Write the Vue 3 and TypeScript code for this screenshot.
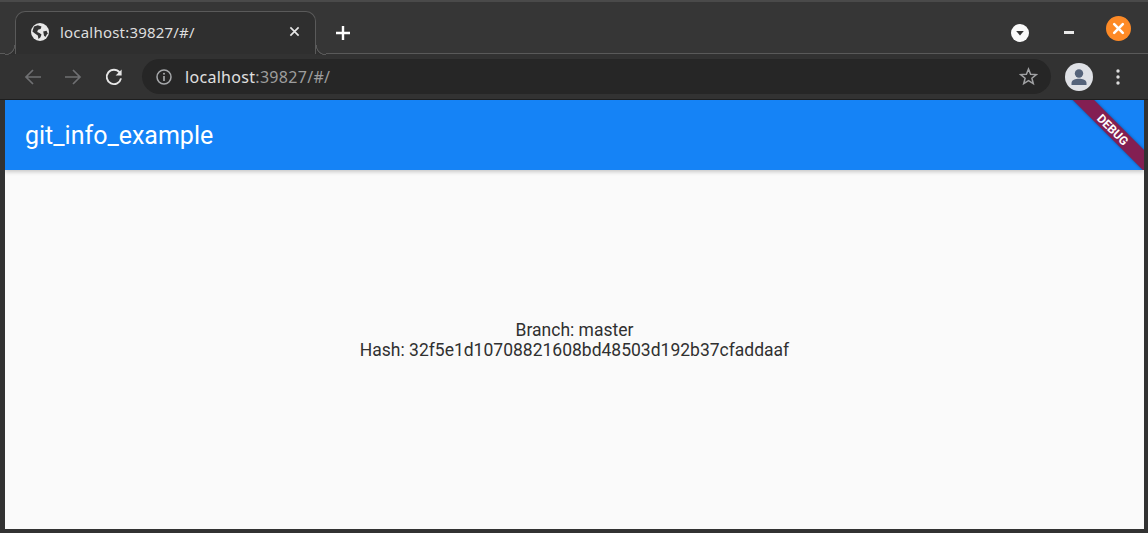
<script setup lang="ts">
const url = 'localhost:39827/#/'
const host = 'localhost'
const rest = ':39827/#/'
const branch = 'master'
const hash = '32f5e1d10708821608bd48503d192b37cfaddaaf'
</script>

<template>
  <div class="window">
    <header class="tabstrip">
      <div class="tab">
        <svg class="globe" width="18" height="18" viewBox="0 0 18 18">
          <circle cx="9" cy="9" r="9" fill="#e8e8e8" />
          <path d="M3 3.5 6.8 2.2 10.5 3.4 9.6 6 7 6.8 6.2 9 8.5 10 10.5 11.6 9.5 14.2 7.5 16 6.8 12.6 3.6 10.2 1.4 8.4Z" fill="#333" />
          <path d="M12.2 8.6 15.6 7.8 16.6 10.2 14.4 14 13 12.4Z" fill="#333" />
        </svg>
        <span class="tab-title">{{ url }}</span>
        <svg class="tab-close" width="11" height="11" viewBox="0 0 12 12">
          <path d="M1.5 1.5 10.5 10.5M10.5 1.5 1.5 10.5" stroke="#e6e6e6" stroke-width="1.8" fill="none" />
        </svg>
      </div>
      <svg class="new-tab" width="16" height="16" viewBox="0 0 16 16">
        <path d="M8 1V15M1 8H15" stroke="#fff" stroke-width="2.4" fill="none" />
      </svg>
      <div class="win-controls">
        <svg class="dropdown" width="18" height="18" viewBox="0 0 18 18">
          <circle cx="9" cy="9" r="9" fill="#fafafa" />
          <path d="M5.2 7H12.8L9 11.6Z" fill="#333" />
        </svg>
        <span class="minimize"></span>
        <svg class="close" width="25" height="25" viewBox="0 0 25 25">
          <circle cx="12.5" cy="12.5" r="12.5" fill="#fd8a26" />
          <path d="M8.2 8.2 16.8 16.8M16.8 8.2 8.2 16.8" stroke="#fff" stroke-width="2.6" stroke-linecap="round" fill="none" />
        </svg>
      </div>
    </header>

    <nav class="toolbar">
      <svg class="nav-icon first" width="18" height="18" viewBox="0 0 18 18">
        <path d="M17 9H2M9 2 2 9 9 16" stroke="#6f7072" stroke-width="1.7" fill="none" />
      </svg>
      <svg class="nav-icon" width="18" height="18" viewBox="0 0 18 18">
        <path d="M1 9H16M9 2 16 9 9 16" stroke="#6f7072" stroke-width="1.7" fill="none" />
      </svg>
      <svg class="nav-icon" width="20" height="20" viewBox="0 0 20 20">
        <path d="M15.6 5.4A7.2 7.2 0 1 0 17 11.4" stroke="#e6e6e6" stroke-width="1.9" fill="none" />
        <path d="M17.6 2.4V8.4H11.6Z" fill="#e6e6e6" />
      </svg>
      <div class="omnibox">
        <svg class="info" width="16" height="16" viewBox="0 0 16 16">
          <circle cx="8" cy="8" r="7" stroke="#a6a8ab" stroke-width="1.5" fill="none" />
          <path d="M8 7V12" stroke="#a6a8ab" stroke-width="1.7" />
          <circle cx="8" cy="4.7" r="1" fill="#a6a8ab" />
        </svg>
        <span class="address"><span class="host">{{ host }}</span><span class="rest">{{ rest }}</span></span>
        <svg class="star" width="19" height="19" viewBox="0 0 19 19">
          <path d="M9.5 2 11.6 7.2 17.3 7.6 12.9 11.2 14.3 16.7 9.5 13.7 4.7 16.7 6.1 11.2 1.7 7.6 7.4 7.2Z" stroke="#a0a1a3" stroke-width="1.5" fill="none" />
        </svg>
      </div>
      <svg class="avatar" width="28" height="28" viewBox="0 0 28 28">
        <circle cx="14" cy="14" r="14" fill="#dfe1e6" />
        <circle cx="14" cy="10.5" r="4.2" fill="#55637a" />
        <path d="M6.5 22V20C6.5 17 10.5 15.8 14 15.8S21.5 17 21.5 20V22Z" fill="#55637a" />
      </svg>
      <svg class="menu" width="4" height="16" viewBox="0 0 4 16">
        <circle cx="2" cy="2" r="1.7" fill="#dcdcdc" />
        <circle cx="2" cy="8" r="1.7" fill="#dcdcdc" />
        <circle cx="2" cy="14" r="1.7" fill="#dcdcdc" />
      </svg>
    </nav>

    <main class="page">
      <div class="appbar">
        <h1 class="app-title">git_info_example</h1>
        <div class="debug"><span>DEBUG</span></div>
      </div>
      <div class="body">
        <p>Branch: {{ branch }}</p>
        <p>Hash: {{ hash }}</p>
      </div>
    </main>
  </div>
</template>

<style scoped>
.window {
  width: 1148px;
  height: 533px;
  box-sizing: border-box;
  background: #323232;
  display: flex;
  flex-direction: column;
  padding: 0 4px 4px 5px;
  border-top: 2px solid #4a4a4a;
  overflow: hidden;
  font-family: "Noto Sans", sans-serif;
}
.tabstrip {
  height: 52px;
  flex: none;
  display: flex;
  align-items: flex-end;
  background: #363636;
  margin: 0 -4px 0 -5px;
  padding-left: 15px;
  border-bottom: 1px solid #5a5a5a;
  box-sizing: border-box;
}
.tab {
  position: relative;
  width: 301px;
  height: 43px;
  margin-bottom: -1px;
  box-sizing: border-box;
  background: #2f2f2f;
  border: 1px solid #5a5a5a;
  border-bottom: none;
  border-radius: 10px 10px 0 0;
  display: flex;
  align-items: center;
  padding: 0 15px 3px 15px;
}
.tab::before,
.tab::after {
  content: "";
  position: absolute;
  bottom: -1px;
  width: 10px;
  height: 10px;
}
.tab::before {
  left: -11px;
  background: radial-gradient(circle at 0 0, #363636 9px, #5a5a5a 9.5px, #5a5a5a 10px, #2f2f2f 10.5px);
}
.tab::after {
  right: -11px;
  background: radial-gradient(circle at 100% 0, #363636 9px, #5a5a5a 9.5px, #5a5a5a 10px, #2f2f2f 10.5px);
}
.tab-title {
  margin-left: 11px;
  font-size: 15px;
  letter-spacing: 0.2px;
  color: #dedede;
  flex: 1;
}
.new-tab {
  margin: 0 0 12px 19px;
}
.win-controls {
  margin-left: auto;
  align-self: flex-start;
  display: flex;
  align-items: flex-start;
  padding-right: 17px;
}
.dropdown {
  margin-top: 22px;
}
.minimize {
  width: 10px;
  height: 3px;
  background: #e8e8e8;
  margin: 29px 0 0 35px;
}
.close {
  margin: 14px 0 0 32px;
}
.toolbar {
  height: 46px;
  flex: none;
  display: flex;
  align-items: center;
  background: #323232;
  margin: 0 -4px 0 -5px;
  padding: 0 0 0 24px;
  border-bottom: 1px solid #1e1e1e;
  box-sizing: border-box;
}
.nav-icon {
  margin-right: 22px;
}
.omnibox {
  width: 909px;
  height: 35px;
  margin-left: -4px;
  border-radius: 18px;
  background: #262626;
  display: flex;
  align-items: center;
  padding: 0 13px 0 14px;
  box-sizing: border-box;
}
.address {
  margin-left: 13px;
  font-size: 16px;
  letter-spacing: 0.3px;
  flex: 1;
}
.host {
  color: #e0e0e0;
}
.rest {
  color: #9d9d9d;
}
.avatar {
  margin-left: 14px;
}
.menu {
  margin-left: 23px;
}
.page {
  flex: 1;
  min-height: 0;
  display: flex;
  flex-direction: column;
  background: #fafafa;
  font-family: Roboto, sans-serif;
}
.appbar {
  height: 70px;
  flex: none;
  position: relative;
  overflow: hidden;
  background: #1583f6;
  display: flex;
  align-items: center;
  padding-left: 20px;
  box-shadow: 0 2px 4px rgba(0, 0, 0, 0.2);
  clip-path: inset(0 0 -6px 0);
}
.app-title {
  margin: 0;
  font-size: 25px;
  font-weight: 400;
  color: #fff;
}
.debug {
  position: absolute;
  top: 22px;
  right: -39px;
  width: 140px;
  height: 15px;
  transform: rotate(45deg);
  background: #831f52;
  box-shadow: 0 0 3px rgba(0, 0, 0, 0.4);
  display: flex;
  align-items: center;
  justify-content: center;
}
.debug span {
  font-size: 12px;
  font-weight: 700;
  color: #fff;
}
.body {
  flex: 1;
  display: flex;
  flex-direction: column;
  align-items: center;
  justify-content: center;
  color: #303030;
  font-size: 17.5px;
  line-height: 20px;
  padding-bottom: 20px;
}
.body p {
  margin: 0;
}
</style>
